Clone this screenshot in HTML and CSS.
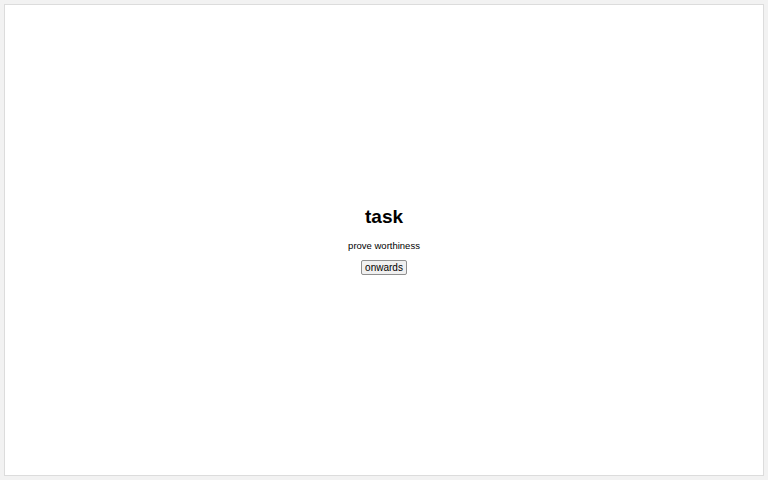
FILE: index.html
```html
<!DOCTYPE html>
<html>
<head>
<meta charset="utf-8">
<link rel="stylesheet" href="styles.css">
</head>
<body>
<div class="frame">
  <div class="content">
    <h1 class="title">task</h1>
    <p class="desc">prove worthiness</p>
    <button class="btn">onwards</button>
  </div>
</div>
</body>
</html>
```
FILE: styles.css
```css
html, body {
  margin: 0;
  padding: 0;
  height: 100%;
}
body {
  background: #f2f2f2;
  padding: 4px;
  box-sizing: border-box;
  font-family: "Liberation Sans", Arial, sans-serif;
}
.frame {
  background: #fff;
  border: 1px solid #dcdcdc;
  height: 472px;
  box-sizing: border-box;
  display: flex;
  align-items: center;
  justify-content: center;
}
.content {
  display: flex;
  flex-direction: column;
  align-items: center;
}
.title {
  font-size: 19px;
  font-weight: bold;
  margin: 1px 0 0;
  color: #000;
}
.desc {
  font-size: 9.5px;
  margin: 12px 0 9px;
  color: #000;
}
.btn {
  font-family: "Liberation Sans", Arial, sans-serif;
  font-size: 10px;
  padding: 1px 3px;
  border: 1px solid #8f8f8f;
  border-radius: 2px;
  background: #f0f0f0;
  color: #000;
}
```
